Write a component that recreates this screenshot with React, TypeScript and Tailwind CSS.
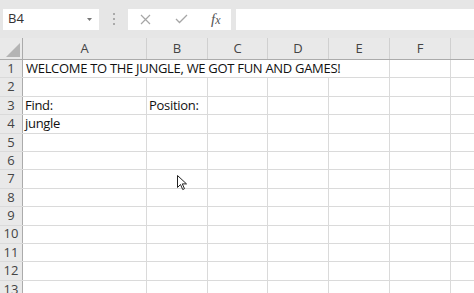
import React from 'react';

const columns = [
  { name: 'A', width: 124 },
  { name: 'B', width: 61 },
  { name: 'C', width: 60 },
  { name: 'D', width: 61 },
  { name: 'E', width: 61 },
  { name: 'F', width: 61 },
  { name: 'G', width: 60 },
];

const rowCount = 13;

const cellText: Record<string, string> = {
  A3: 'Find:',
  B3: 'Position:',
  A4: 'jungle',
};

const Toolbar: React.FC = () => (
  <div className="flex h-[38px] items-center bg-[#e6e6e6] pl-[3px]">
    {/* name box */}
    <div className="relative flex h-[21px] w-[96px] items-center bg-white pl-[5px] text-[13px] text-[#333]">
      B4
      <svg className="absolute right-[7px] top-[9px]" width="5" height="3" viewBox="0 0 5 3">
        <path d="M0 0h5L2.5 3z" fill="#777" />
      </svg>
    </div>
    {/* drag dots */}
    <div className="flex w-[29px] flex-col items-center gap-[3px]">
      <span className="h-[2px] w-[2px] bg-[#aaa]" />
      <span className="h-[2px] w-[2px] bg-[#aaa]" />
      <span className="h-[2px] w-[2px] bg-[#aaa]" />
    </div>
    {/* cancel / enter / function */}
    <div className="flex h-[21px] w-[103px] items-center bg-white">
      <svg className="ml-[12px]" width="11" height="11" viewBox="0 0 11 11">
        <path d="M1 1l9 9M10 1l-9 9" stroke="#a6a6a6" strokeWidth="1.2" />
      </svg>
      <svg className="ml-[24px]" width="13" height="10" viewBox="0 0 13 10">
        <path d="M1 5l3.5 3.5L12 1" stroke="#a6a6a6" strokeWidth="1.3" fill="none" />
      </svg>
      <span className="ml-[23px] text-[15px] italic text-[#555] [font-family:'Liberation_Serif',serif]">
        f<span className="text-[12px]">x</span>
      </span>
    </div>
    {/* formula input */}
    <div className="ml-[5px] h-[21px] flex-1 bg-white" />
  </div>
);

const HeaderRow: React.FC = () => (
  <div className="flex h-[22px] border-b border-[#ababab] bg-[#e9e9e9]">
    <div className="relative w-[23px] shrink-0 border-r border-[#ababab]">
      <svg className="absolute bottom-[2px] right-[2px]" width="14" height="14" viewBox="0 0 14 14">
        <path d="M14 0v14H0z" fill="#b4b4b4" />
      </svg>
    </div>
    {columns.map((col) => (
      <div
        key={col.name}
        style={{ width: col.width }}
        className="flex shrink-0 items-center justify-center border-r border-[#d0d0d0] text-[13px] text-[#444]"
      >
        {col.name}
      </div>
    ))}
  </div>
);

const Row: React.FC<{ index: number }> = ({ index }) => {
  const isTitle = index === 1;
  return (
    <div className="flex h-[18.4px] border-b border-[#dadada]">
      <div className="flex w-[23px] shrink-0 items-center justify-center border-r border-[#ababab] bg-[#e9e9e9] text-[13px] text-[#444]">
        {index}
      </div>
      {isTitle ? (
        <>
          <div className="flex w-[367px] shrink-0 items-center whitespace-nowrap border-r border-[#dadada] pl-[3px] text-[13px] tracking-[-0.3px] text-[#111]">
            WELCOME TO THE JUNGLE, WE GOT FUN AND GAMES!
          </div>
          {columns.slice(5).map((col) => (
            <div key={col.name} style={{ width: col.width }} className="shrink-0 border-r border-[#dadada]" />
          ))}
        </>
      ) : (
        columns.map((col) => (
          <div
            key={col.name}
            style={{ width: col.width }}
            className="flex shrink-0 items-center whitespace-nowrap border-r border-[#dadada] pl-[2px] text-[13px] tracking-[-0.3px] text-[#111]"
          >
            {cellText[`${col.name}${index}`]}
          </div>
        ))
      )}
    </div>
  );
};

export default function App() {
  return (
    <div className="relative h-[293px] w-[474px] overflow-hidden bg-white [font-family:'Open_Sans','Noto_Sans',sans-serif]">
      <Toolbar />
      <HeaderRow />
      {Array.from({ length: rowCount }, (_, i) => (
        <Row key={i + 1} index={i + 1} />
      ))}
      {/* mouse pointer */}
      <svg className="absolute left-[177px] top-[175px]" width="10" height="16" viewBox="0 0 10 16">
        <path d="M0.5 0.5v12l3-3 2.2 5 1.8-.8-2.2-4.8h4.2z" fill="#fff" stroke="#222" strokeWidth="1" />
      </svg>
    </div>
  );
}
